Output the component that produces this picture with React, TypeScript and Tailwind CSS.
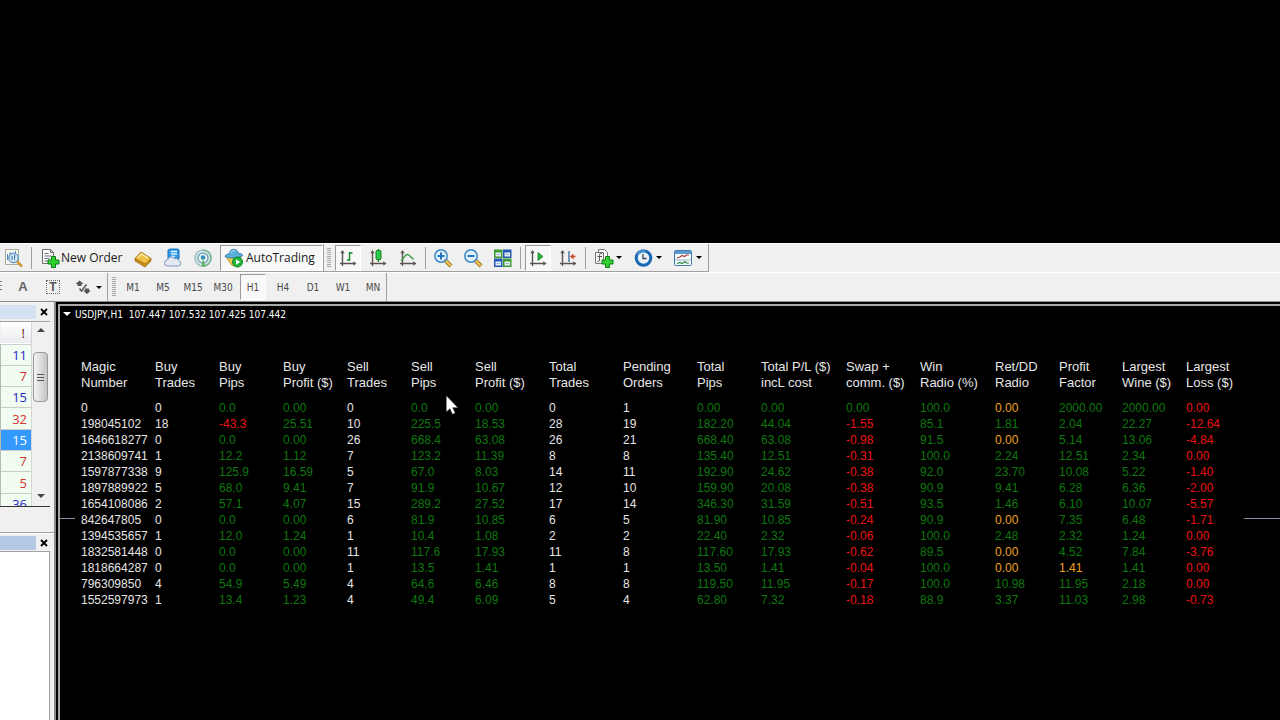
import type { ReactNode } from 'react';
import clsx from 'clsx';

type Tone = 'white' | 'green' | 'red' | 'orange';

const toneClass: Record<Tone, string> = {
  white: 'text-[#e6e6e6]',
  green: 'text-[#0d780d]',
  red: 'text-[#e81212]',
  orange: 'text-[#eda220]',
};

const columns = [
  { lines: ['Magic', 'Number'], width: 'w-[74px]' },
  { lines: ['Buy', 'Trades'], width: 'w-[64px]' },
  { lines: ['Buy', 'Pips'], width: 'w-[64px]' },
  { lines: ['Buy', 'Profit ($)'], width: 'w-[64px]' },
  { lines: ['Sell', 'Trades'], width: 'w-[64px]' },
  { lines: ['Sell', 'Pips'], width: 'w-[64px]' },
  { lines: ['Sell', 'Profit ($)'], width: 'w-[74px]' },
  { lines: ['Total', 'Trades'], width: 'w-[74px]' },
  { lines: ['Pending', 'Orders'], width: 'w-[74px]' },
  { lines: ['Total', 'Pips'], width: 'w-[64px]' },
  { lines: ['Total P/L ($)', 'incL cost'], width: 'w-[85px]' },
  { lines: ['Swap +', 'comm. ($)'], width: 'w-[74px]' },
  { lines: ['Win', 'Radio (%)'], width: 'w-[75px]' },
  { lines: ['Ret/DD', 'Radio'], width: 'w-[64px]' },
  { lines: ['Profit', 'Factor'], width: 'w-[63px]' },
  { lines: ['Largest', 'Wine ($)'], width: 'w-[64px]' },
  { lines: ['Largest', 'Loss ($)'], width: 'w-auto' },
];

const rows = [
  '0 0 0.0 0.00 0 0.0 0.00 0 1 0.00 0.00 0.00 100.0 0.00 2000.00 2000.00 0.00',
  '198045102 18 -43.3 25.51 10 225.5 18.53 28 19 182.20 44.04 -1.55 85.1 1.81 2.04 22.27 -12.64',
  '1646618277 0 0.0 0.00 26 668.4 63.08 26 21 668.40 63.08 -0.98 91.5 0.00 5.14 13.06 -4.84',
  '2138609741 1 12.2 1.12 7 123.2 11.39 8 8 135.40 12.51 -0.31 100.0 2.24 12.51 2.34 0.00',
  '1597877338 9 125.9 16.59 5 67.0 8.03 14 11 192.90 24.62 -0.38 92.0 23.70 10.08 5.22 -1.40',
  '1897889922 5 68.0 9.41 7 91.9 10.67 12 10 159.90 20.08 -0.38 90.9 9.41 6.28 6.36 -2.00',
  '1654108086 2 57.1 4.07 15 289.2 27.52 17 14 346.30 31.59 -0.51 93.5 1.46 6.10 10.07 -5.57',
  '842647805 0 0.0 0.00 6 81.9 10.85 6 5 81.90 10.85 -0.24 90.9 0.00 7.35 6.48 -1.71',
  '1394535657 1 12.0 1.24 1 10.4 1.08 2 2 22.40 2.32 -0.06 100.0 2.48 2.32 1.24 0.00',
  '1832581448 0 0.0 0.00 11 117.6 17.93 11 8 117.60 17.93 -0.62 89.5 0.00 4.52 7.84 -3.76',
  '1818664287 0 0.0 0.00 1 13.5 1.41 1 1 13.50 1.41 -0.04 100.0 0.00 1.41 1.41 0.00',
  '796309850 4 54.9 5.49 4 64.6 6.46 8 8 119.50 11.95 -0.17 100.0 10.98 11.95 2.18 0.00',
  '1552597973 1 13.4 1.23 4 49.4 6.09 5 4 62.80 7.32 -0.18 88.9 3.37 11.03 2.98 -0.73',
].map((line) => line.split(' '));

const countColumns = [0, 1, 4, 7, 8];

function cellTone(value: string, col: number): Tone {
  if (countColumns.includes(col)) return 'white';
  if (col === 16 || value.startsWith('-')) return 'red';
  if (col === 13 && value === '0.00') return 'orange';
  if (col === 14 && Number(value) < 2) return 'orange';
  return 'green';
}

const spreads = [
  { value: '11', up: true },
  { value: '7', up: false },
  { value: '15', up: true },
  { value: '32', up: false },
  { value: '15', selected: true },
  { value: '7', up: false },
  { value: '5', up: false },
  { value: '36', up: true },
];

const timeframes = ['M1', 'M5', 'M15', 'M30', 'H1', 'H4', 'D1', 'W1', 'MN'];

/* Toolbar parts */

function Icon({ children }: { children: ReactNode }) {
  return (
    <svg className="h-5 w-5 shrink-0" viewBox="0 0 20 20" fill="none" aria-hidden="true">
      {children}
    </svg>
  );
}

function DropArrow() {
  return (
    <svg className="h-[3px] w-[6px] shrink-0" viewBox="0 0 6 3" aria-hidden="true">
      <path d="M0 0h6L3 3z" fill="#000" />
    </svg>
  );
}

function ToolButton({
  label,
  active,
  drop,
  children,
}: {
  label: string;
  active?: boolean;
  drop?: boolean;
  children: ReactNode;
}) {
  return (
    <button
      type="button"
      aria-label={label}
      className={clsx(
        'flex h-[26px] shrink-0 items-center border',
        drop ? 'w-9 justify-between px-[3px]' : 'w-[26px] justify-center',
        active
          ? 'border-t-[#9a9a9a] border-r-white border-b-white border-l-[#9a9a9a] bg-[#f8f8f8]'
          : 'border-transparent',
      )}
    >
      {children}
      {drop && <DropArrow />}
    </button>
  );
}

function Separator() {
  return <span className="h-[22px] w-px shrink-0 bg-[#a0a0a0]" />;
}

function Grip() {
  return (
    <span className="h-5 w-1 shrink-0 bg-[repeating-linear-gradient(to_bottom,#a8a8a8_0_1px,#f0f0f0_1px_2px)]" />
  );
}

function PlusBadge() {
  return (
    <path
      d="M11.500 8.500h4v3.500H19v4h-3.500v3.500h-4V16H8v-4h3.500z"
      fill="#2fd02f"
      stroke="#0c7d14"
      strokeWidth="1"
    />
  );
}

function Axes() {
  return (
    <>
      <path d="M4.500 4v14M2 15.500h14" stroke="#5c5450" strokeWidth="1.400" />
      <path d="M4.500 2l2.200 3.200H2.300zM18.500 15.500l-3.200 2.200v-4.400z" fill="#5c5450" />
    </>
  );
}

function MarketIcon() {
  return (
    <Icon>
      <path d="M1.500 1.500h13v15h-13z" fill="#fbfbf4" stroke="#a9a99c" />
      <path d="M3.500 6v6M6 4v6M8.500 6v5M11.500 3v7" stroke="#4f86b8" />
      <circle cx="9.500" cy="10" r="4.700" fill="#cfe6f7" fillOpacity=".85" stroke="#6c9ec4" strokeWidth="1.500" />
      <path d="M8 8v4M10.500 7v5" stroke="#417aae" />
      <path d="M13 13.500l5 5" stroke="#d29a35" strokeWidth="2.500" />
    </Icon>
  );
}

function NewOrderIcon() {
  return (
    <Icon>
      <path d="M2.500 1.500h8l3 3v11h-11z" fill="#fafafa" stroke="#6d6d6d" />
      <path d="M10.500 1.500v3h3" stroke="#6d6d6d" />
      <path d="M4.500 5.500h4M4.500 8h7M4.500 10.500h5M4.500 13h4" stroke="#6f7782" />
      <PlusBadge />
    </Icon>
  );
}

function BookIcon() {
  return (
    <Icon>
      <path d="M2 10.500l6-6.500 10 6.500-5.500 7z" fill="#edc148" stroke="#a87812" />
      <path d="M2 10.500v2.500l10 6 6-6v-2.500L12.500 16z" fill="#c98f1a" stroke="#96690e" strokeWidth=".7" />
      <path d="M5 9.500L8.500 6l6.500 4" stroke="#fae79c" strokeWidth="1.500" />
    </Icon>
  );
}

function CloudServerIcon() {
  return (
    <Icon>
      <path d="M5 2l2-1h8l1 1v9H5z" fill="#2e9be8" stroke="#1b70bd" />
      <path d="M8 3.500h6M8 6h6M8 8.500h4" stroke="#d9f0ff" strokeWidth="1.300" />
      <path
        d="M4.500 18a3 3 0 0 1 0-6 4 4 0 0 1 7-1.500 3.200 3.200 0 0 1 4 2 2.800 2.800 0 0 1 0 5.500z"
        fill="#e3eaf6"
        stroke="#8496bc"
      />
    </Icon>
  );
}

function SignalIcon() {
  return (
    <Icon>
      <circle cx="10" cy="10" r="8" fill="#dde9e6" stroke="#9dbcc9" strokeWidth="1.500" />
      <path d="M10 2a8 8 0 0 1 0 16" stroke="#72b98c" strokeWidth="1.500" />
      <circle cx="10" cy="10" r="5" fill="#eef4f2" stroke="#78a8c0" strokeWidth="1.500" />
      <circle cx="10" cy="9.500" r="2.300" fill="#2e8fc1" />
      <path d="M10 10l2 8.500H9z" fill="#45b348" />
    </Icon>
  );
}

function AutoTradingIcon() {
  return (
    <Icon>
      <path d="M1.500 8l16.500-1-5 11-5-.5z" fill="#f0c94b" stroke="#c4962a" />
      <path d="M1 8.500c0-2 3-2.500 4-2.500C6 2 8 1 10 1.500c3 0 4 2 4.500 4 2 0 4 .5 4 2C16 10 5 11 1 8.500z" fill="#59afd8" stroke="#3383b0" />
      <path d="M6.500 5c1-2 3-2.500 5-2" stroke="#b9e2f5" />
      <circle cx="13.500" cy="14" r="5" fill="#22b53a" stroke="#0f8525" />
      <path d="M12 11.200v5.600l4.200-2.800z" fill="#fff" />
    </Icon>
  );
}

function BarsIcon() {
  return (
    <Icon>
      <Axes />
      <path d="M11.500 4v9M11.500 5h3M9 12h2.500" stroke="#198a2c" strokeWidth="1.500" />
    </Icon>
  );
}

function CandleIcon() {
  return (
    <Icon>
      <Axes />
      <path d="M10.500 1v13" stroke="#148226" strokeWidth="1.300" />
      <rect x="8" y="2.500" width="5" height="9" rx="1" fill="#2fc84a" stroke="#148226" />
    </Icon>
  );
}

function LineIcon() {
  return (
    <Icon>
      <Axes />
      <path d="M3 12.500c3-1.500 4-6.500 6.500-6 2.500.5 3.500 3.500 6 4.500" stroke="#3c9a4b" strokeWidth="1.400" />
    </Icon>
  );
}

function ZoomIcon({ plus }: { plus?: boolean }) {
  return (
    <Icon>
      <path d="M12.500 12.500l5.500 5.500" stroke="#a67b1d" strokeWidth="4" />
      <path d="M12.500 12.500l5 5" stroke="#efcf5a" strokeWidth="2" />
      <circle cx="8" cy="8" r="6.200" fill="#dff0fc" stroke="#3e86c8" strokeWidth="1.500" />
      <path d={plus ? 'M4.500 8h7M8 4.500v7' : 'M4.500 8h7'} stroke="#2b74ba" strokeWidth="2" />
    </Icon>
  );
}

function TileIcon() {
  return (
    <Icon>
      <path d="M1 1.500h8.500v8.500H1zM10 10.500h8.500V19H10z" fill="#3f9a32" />
      <path d="M10 1.500h8.500v8.500H10zM1 10.500h8.500V19H1z" fill="#2458b4" />
      <path d="M2.500 4.500H8v4H2.500zM11.500 4.500H17v4h-5.500zM2.500 13.500H8v4H2.500zM11.500 13.500H17v4h-5.500z" fill="#e9f1f8" />
      <path d="M3.500 6.500H7M12.500 6.500H16M3.500 15.500H7M12.500 15.500H16" stroke="#9db6cb" />
    </Icon>
  );
}

function AutoScrollIcon() {
  return (
    <Icon>
      <Axes />
      <path d="M10 4.500v8l5-4z" fill="#27b23d" stroke="#158428" strokeWidth=".8" />
    </Icon>
  );
}

function ShiftIcon() {
  return (
    <Icon>
      <Axes />
      <path d="M11 3v11" stroke="#3e6d9c" strokeWidth="1.400" />
      <path d="M17.500 8.500H14" stroke="#c84a25" strokeWidth="1.500" />
      <path d="M12 8.500l3.500-3v6z" fill="#c84a25" />
    </Icon>
  );
}

function IndicatorsIcon() {
  return (
    <Icon>
      <path d="M4.500 1.500h6l3 3v10h-9z" fill="#fafafa" stroke="#777" />
      <path d="M1.500 4.500h8v11h-8z" fill="#f3f3f3" stroke="#777" />
      <path d="M8 5.500c-2-.5-2.500 0-2.500 2V12c0 1.500-.5 1.500-2 1.500M3.500 8.500H8" stroke="#555" />
      <PlusBadge />
    </Icon>
  );
}

function ClockIcon() {
  return (
    <Icon>
      <circle cx="9.500" cy="10" r="7.300" fill="#e8f3fb" stroke="#1b68b3" strokeWidth="3" />
      <path d="M3.500 6.500A7.300 7.300 0 0 1 11.500 3" stroke="#68b2ea" strokeWidth="1.200" />
      <path d="M9 6v4.500h3.500" stroke="#444" strokeWidth="1.300" />
    </Icon>
  );
}

function TemplateIcon() {
  return (
    <Icon>
      <rect x=".5" y="2.500" width="17" height="15" rx="1" fill="#f6fafc" stroke="#3f79ad" />
      <path d="M1 3h16v3H1z" fill="#5d9bd2" />
      <path d="M1 12h16" stroke="#9db7cb" />
      <path d="M3 10l3-1 2-1.500 2.500 1 2-1.500H15" stroke="#a6432f" strokeWidth="1.200" />
      <path d="M3 15.500l3-1 2 1 3-2 1.500 1.500H15" stroke="#2f8b3e" strokeWidth="1.200" />
    </Icon>
  );
}

function ArrowsIcon() {
  return (
    <Icon>
      <path d="M5.500 3.500L9.500 7H7.500v2h-4V7h-2z" fill="#555" />
      <path d="M13 17l-4-3.500h2v-2h4v2h2z" fill="#555" />
      <path d="M5.500 11.500L7.500 14l5-6.500" stroke="#555" strokeWidth="1.500" />
    </Icon>
  );
}

function Toolbars() {
  return (
    <header className="border-t border-white bg-[#f0f0f0]">
      <div className="flex">
        <div className="flex h-7 items-center gap-1 border-r border-b border-[#a0a0a0] pl-px">
          <ToolButton label="Market Watch">
            <MarketIcon />
          </ToolButton>
          <Separator />
          <button type="button" className="flex h-[26px] w-[90px] shrink-0 items-center gap-px pl-1 whitespace-nowrap">
            <NewOrderIcon />
            New Order
          </button>
          <ToolButton label="MetaEditor">
            <BookIcon />
          </ToolButton>
          <ToolButton label="Virtual Hosting">
            <CloudServerIcon />
          </ToolButton>
          <ToolButton label="Signals">
            <SignalIcon />
          </ToolButton>
          <button
            type="button"
            aria-pressed="true"
            className="flex h-[26px] w-[103px] shrink-0 items-center gap-[2px] border border-t-[#9a9a9a] border-r-white border-b-white border-l-[#9a9a9a] bg-[#f8f8f8] pl-[3px] whitespace-nowrap"
          >
            <AutoTradingIcon />
            AutoTrading
          </button>
        </div>
        <div className="flex h-7 items-center gap-1 border-r border-b border-[#a0a0a0] pr-[2px] pl-[3px]">
          <Grip />
          <ToolButton label="Bar Chart" active>
            <BarsIcon />
          </ToolButton>
          <ToolButton label="Candlesticks">
            <CandleIcon />
          </ToolButton>
          <ToolButton label="Line Chart">
            <LineIcon />
          </ToolButton>
          <Separator />
          <ToolButton label="Zoom In">
            <ZoomIcon plus />
          </ToolButton>
          <ToolButton label="Zoom Out">
            <ZoomIcon />
          </ToolButton>
          <ToolButton label="Tile Windows">
            <TileIcon />
          </ToolButton>
          <Separator />
          <ToolButton label="Auto Scroll" active>
            <AutoScrollIcon />
          </ToolButton>
          <ToolButton label="Chart Shift">
            <ShiftIcon />
          </ToolButton>
          <Separator />
          <ToolButton label="Indicators" drop>
            <IndicatorsIcon />
          </ToolButton>
          <ToolButton label="Periods" drop>
            <ClockIcon />
          </ToolButton>
          <ToolButton label="Templates" drop>
            <TemplateIcon />
          </ToolButton>
        </div>
      </div>

      <div className="flex border-t border-white">
        <div className="flex h-7 items-center gap-1 border-r border-[#a0a0a0] pr-px">
          <span className="mr-1 h-3 w-[2px] bg-[repeating-linear-gradient(to_bottom,#777_0_1px,#f0f0f0_1px_4px)]" />
          <button
            type="button"
            aria-label="Text"
            className="h-[26px] w-[26px] font-['Liberation_Sans'] text-[13px] font-bold text-[#666]"
          >
            A
          </button>
          <button type="button" aria-label="Text Label" className="flex h-[26px] w-[26px] items-center justify-center">
            <span className="h-[14px] w-[14px] border border-dotted border-[#666] font-['Liberation_Sans'] text-[12px] leading-3 font-bold text-[#555]">
              T
            </span>
          </button>
          <ToolButton label="Arrows" drop>
            <ArrowsIcon />
          </ToolButton>
        </div>
        <div className="flex h-7 items-center gap-1 border-r border-[#a0a0a0] pl-1">
          <Grip />
          {timeframes.map((tf) => (
            <button
              key={tf}
              type="button"
              className={clsx(
                "flex h-[26px] w-[26px] shrink-0 items-center justify-center border font-['DejaVu_Sans_Condensed','Open_Sans',sans-serif] text-[10px] text-[#4a4a4a]",
                tf === 'H1'
                  ? 'border-t-[#9a9a9a] border-r-white border-b-white border-l-[#9a9a9a] bg-[#f8f8f8]'
                  : 'border-transparent',
              )}
            >
              {tf}
            </button>
          ))}
        </div>
      </div>
    </header>
  );
}

/* Docked windows on the left */

function DockTitle({ tint }: { tint: string }) {
  return (
    <div className="flex h-[17px] items-center">
      <span className={clsx('h-[14px] w-9', tint)} />
      <button type="button" aria-label="Close" className="flex h-4 w-4 items-center justify-center">
        <svg className="h-2 w-2" viewBox="0 0 8 8" aria-hidden="true">
          <path d="M1 1l6 6M7 1L1 7" stroke="#000" strokeWidth="1.800" />
        </svg>
      </button>
    </div>
  );
}

function ScrollBar() {
  return (
    <div className="flex w-[17px] flex-col items-center bg-[#f0f0f0] pt-[6px] pb-2">
      <svg className="h-1 w-2" viewBox="0 0 8 4" aria-hidden="true">
        <path d="M4 0l4 4H0z" fill="#444" />
      </svg>
      <div className="mt-5 flex h-[50px] w-[15px] flex-col items-center justify-center gap-[2px] rounded-sm border border-[#979797] bg-linear-to-r from-[#f5f5f5] to-[#c4c4c4]">
        <span className="h-px w-[7px] bg-[#555]" />
        <span className="h-px w-[7px] bg-[#555]" />
        <span className="h-px w-[7px] bg-[#555]" />
      </div>
      <svg className="mt-auto h-1 w-2" viewBox="0 0 8 4" aria-hidden="true">
        <path d="M0 0h8L4 4z" fill="#444" />
      </svg>
    </div>
  );
}

function Dock() {
  return (
    <aside className="flex w-[56px] shrink-0 flex-col border-r-2 border-[#8c8c8c] bg-[#f0f0f0]">
      <div className="pt-px">
        <DockTitle tint="bg-[#d3e1f1]" />
      </div>
      <div className="mt-px mr-1 flex h-[186px] overflow-hidden border-t border-b border-t-[#a0a0a0] border-b-[#333]">
        <div className="w-8 border-r border-[#d5d5d5]">
          <table className="h-[193px] w-full border-collapse text-right text-[13px] leading-4">
            <thead>
              <tr className="h-[22px] border-b border-[#cfcfcf] bg-linear-to-b from-white to-[#e9ebef]">
                <th className="p-0 pr-[6px] font-normal text-[#6b2020]">!</th>
              </tr>
            </thead>
            <tbody>
              {spreads.map((s, i) => (
                <tr
                  key={i}
                  className={clsx(
                    'border-b border-[#c8ccc4]',
                    s.selected ? 'bg-[#3399ff] text-white' : 'bg-[#f0fdf0]',
                    !s.selected && (s.up ? 'text-[#2424c8]' : 'text-[#d83030]'),
                  )}
                >
                  <td className="border-l border-[#b8b8b8] p-0 pr-1">{s.value}</td>
                </tr>
              ))}
            </tbody>
          </table>
        </div>
        <ScrollBar />
      </div>
      <div className="h-[26px] border-b border-[#a0a0a0]" />
      <div className="border-t border-white">
        <DockTitle tint="bg-[#b4c9e4]" />
      </div>
      <div className="mr-1 flex-1 border-t border-r border-[#a0a0a0] bg-white" />
    </aside>
  );
}

function StatsTable() {
  return (
    <table className="w-full table-fixed border-collapse text-left font-['Liberation_Sans',Arial,sans-serif] text-[12px] leading-4 whitespace-nowrap">
      <thead className="text-[13px] text-[#e6e6e6]">
        <tr>
          {columns.map((col, i) => (
            <th key={i} scope="col" className={clsx('p-0 pb-[9px] font-normal', col.width)}>
              {col.lines[0]}
              <br />
              {col.lines[1]}
            </th>
          ))}
        </tr>
      </thead>
      <tbody>
        {rows.map((row) => (
          <tr key={row[0]}>
            {row.map((value, col) => (
              <td key={col} className={clsx('p-0', toneClass[cellTone(value, col)])}>
                {value}
              </td>
            ))}
          </tr>
        ))}
      </tbody>
    </table>
  );
}

function ChartWindow() {
  return (
    <main className="min-w-0 flex-1 overflow-hidden pt-[2px] pl-[2px]">
      <div className="relative h-full border-t-2 border-l-2 border-[#a8a8a8] bg-black">
        {/* current price line, hidden behind the statistics block */}
        <div className="absolute top-[212px] right-0 left-0 h-px bg-[#8492a0]" />
        <div className="flex h-4 items-center gap-1 pl-[3px] font-['DejaVu_Sans_Condensed','Open_Sans',sans-serif] text-[10px] whitespace-pre text-white">
          <svg className="h-1 w-2" viewBox="0 0 8 4" aria-hidden="true">
            <path d="M0 0h8L4 4z" fill="#fff" />
          </svg>
          USDJPY,H1{'  '}107.447 107.532 107.425 107.442
        </div>
        <div className="relative mt-[37px] mr-9 ml-[15px] bg-black pl-[6px]">
          <StatsTable />
          <svg className="absolute top-[36px] left-[371px] h-[21px] w-3" viewBox="0 0 12 21" aria-hidden="true">
            <path d="M.5 1v15.500l3.500-3 2.500 5.500 2.500-1-2.500-5.500h5z" fill="#fff" stroke="#888" strokeWidth=".5" />
          </svg>
        </div>
      </div>
    </main>
  );
}

export default function App() {
  return (
    <div className="flex min-h-screen flex-col bg-black pt-[243px] font-['Open_Sans','Noto_Sans',sans-serif] text-[12px] text-[#1a1a1a]">
      <Toolbars />
      <div className="flex flex-1 border-t border-[#8c8c8c]">
        <Dock />
        <ChartWindow />
      </div>
    </div>
  );
}
